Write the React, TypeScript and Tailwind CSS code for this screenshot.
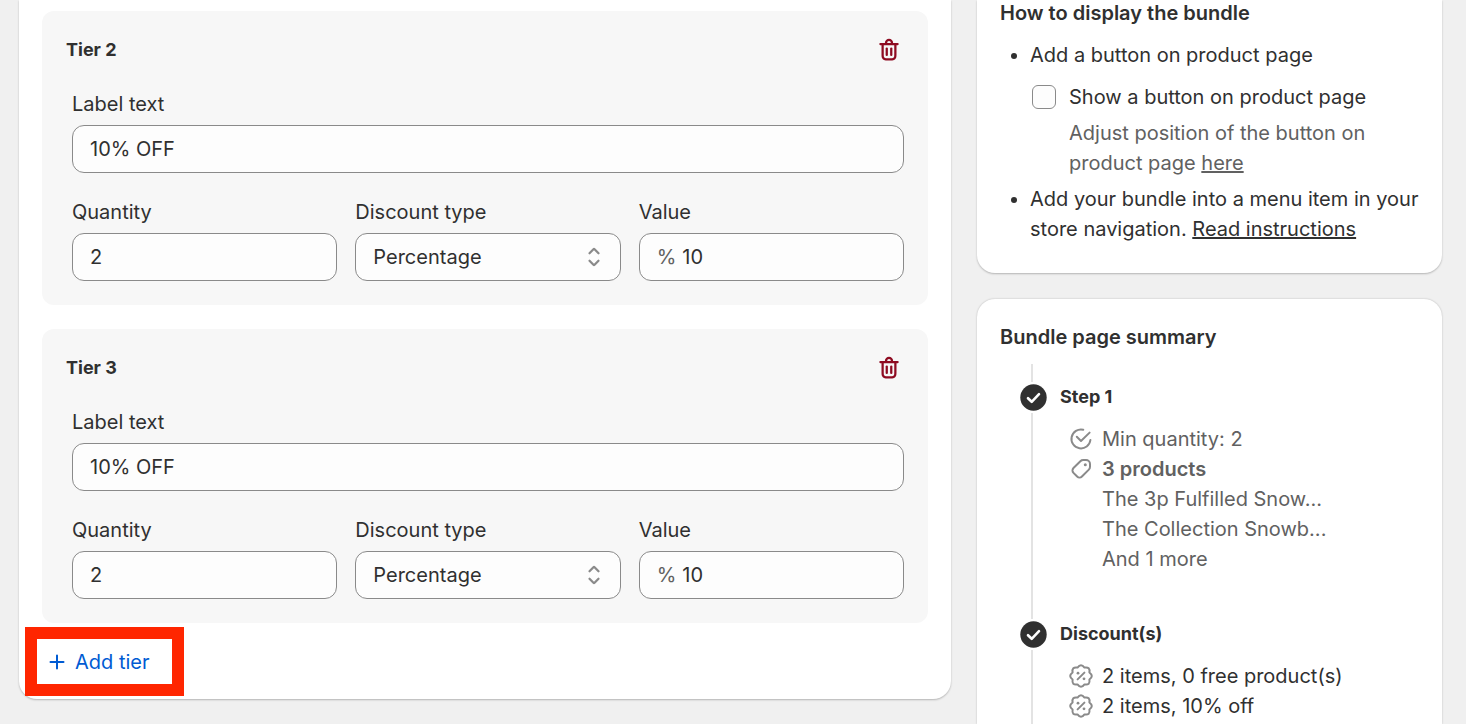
import React, { useId, useState } from "react";

interface Tier {
  id: number;
  label: string;
  quantity: string;
  discountType: string;
  value: string;
}

const initialTiers: Tier[] = [
  {
    id: 2,
    label: "10% OFF",
    quantity: "2",
    discountType: "Percentage",
    value: "10",
  },
  {
    id: 3,
    label: "10% OFF",
    quantity: "2",
    discountType: "Percentage",
    value: "10",
  },
];

const fieldClass =
  "w-full h-12 rounded-xl border border-[#8a8a8a] bg-[#fdfdfd] px-[17px] outline-none focus:border-[#303030]";

const DeleteIcon = () => (
  <svg viewBox="0 0 20 20" className="size-[30px] fill-current">
    <path d="M11.5 8.25a.75.75 0 0 1 .75.75v4.25a.75.75 0 0 1-1.5 0v-4.25a.75.75 0 0 1 .75-.75Z" />
    <path d="M9.25 9a.75.75 0 0 0-1.5 0v4.25a.75.75 0 0 0 1.5 0v-4.25Z" />
    <path
      fillRule="evenodd"
      d="M7.25 5.25a2.75 2.75 0 0 1 5.5 0h3a.75.75 0 0 1 0 1.5h-.75v5.45c0 1.68 0 2.52-.327 3.162a3 3 0 0 1-1.311 1.311c-.642.327-1.482.327-3.162.327h-.4c-1.68 0-2.52 0-3.162-.327a3 3 0 0 1-1.311-1.311c-.327-.642-.327-1.482-.327-3.162v-5.45h-.75a.75.75 0 0 1 0-1.5h3Zm1.5 0a1.25 1.25 0 1 1 2.5 0h-2.5Zm-2.25 1.5h7v5.45c0 .865-.001 1.423-.036 1.848-.033.408-.09.559-.128.633a1.5 1.5 0 0 1-.655.655c-.074.038-.225.095-.633.128-.425.035-.983.036-1.848.036h-.4c-.865 0-1.423-.001-1.848-.036-.408-.033-.559-.09-.633-.128a1.5 1.5 0 0 1-.656-.655c-.037-.074-.094-.225-.127-.633-.035-.425-.036-.983-.036-1.848v-5.45Z"
    />
  </svg>
);

const SelectIcon = () => (
  <svg
    viewBox="0 0 20 20"
    className="pointer-events-none absolute right-3 top-[9px] size-[30px] fill-[#8a8a8a]"
  >
    <path d="M10.884 4.323a1.25 1.25 0 0 0-1.768 0l-2.646 2.647a.75.75 0 0 0 1.06 1.06l2.47-2.47 2.47 2.47a.75.75 0 1 0 1.06-1.06l-2.646-2.647Z" />
    <path d="m13.53 13.03-2.646 2.647a1.25 1.25 0 0 1-1.768 0l-2.646-2.647a.75.75 0 0 1 1.06-1.06l2.47 2.47 2.47-2.47a.75.75 0 0 1 1.06 1.06Z" />
  </svg>
);

const PlusIcon = () => (
  <svg
    viewBox="0 0 16 16"
    className="size-4 fill-none stroke-current stroke-2"
    strokeLinecap="round"
  >
    <path d="M8 1.5v13M1.5 8h13" />
  </svg>
);

const CheckCircleIcon = () => (
  <svg
    viewBox="0 0 30 30"
    className="size-[30px] fill-none stroke-[#8a8a8a] stroke-2"
    strokeLinecap="round"
    strokeLinejoin="round"
  >
    <path d="M17.3 5.7A9.5 9.5 0 1 0 24.4 16" />
    <path d="M10.8 12.8 15 17l8.6-8.4" />
  </svg>
);

const TagIcon = () => (
  <svg
    viewBox="0 0 30 30"
    className="size-[30px] fill-none stroke-[#8a8a8a] stroke-2"
    strokeLinejoin="round"
  >
    <path d="M17.2 6h2.8A4 4 0 0 1 24 10v2.8a4 4 0 0 1-1.17 2.83l-6.9 6.9a3.4 3.4 0 0 1-4.8 0l-3.66-3.66a3.4 3.4 0 0 1 0-4.8l6.9-6.9A4 4 0 0 1 17.2 6Z" />
    <circle cx="19.3" cy="10.7" r="1.5" className="fill-[#8a8a8a] stroke-none" />
  </svg>
);

const DiscountIcon = () => (
  <svg
    viewBox="0 0 30 30"
    className="size-[30px] fill-none stroke-[#8a8a8a] stroke-2"
    strokeLinecap="round"
    strokeLinejoin="round"
  >
    <path d="M6.6 11.5Q5.6 5.6 11.5 6.6 15 1.8 18.5 6.6 24.4 5.6 23.4 11.5 28.2 15 23.4 18.5 24.4 24.4 18.5 23.4 15 28.2 11.5 23.4 5.600 24.4 6.6 18.5 1.8 15 6.6 11.5Z" />
    <path d="m11.6 18.4 6.8-6.8" />
    <circle cx="12" cy="12.2" r="1.4" className="fill-[#8a8a8a] stroke-none" />
    <circle cx="18" cy="17.8" r="1.4" className="fill-[#8a8a8a] stroke-none" />
  </svg>
);

const StepCheck = () => (
  <svg viewBox="0 0 27 27" className="my-0.5 size-[27px] shrink-0">
    <circle cx="13.5" cy="13.5" r="13.2" fill="#303030" />
    <path
      d="m8 14.2 3.7 3.6 7.3-7.6"
      fill="none"
      stroke="#fff"
      strokeWidth="2.6"
      strokeLinecap="round"
      strokeLinejoin="round"
    />
  </svg>
);

interface FieldProps {
  id: string;
  label: string;
  children: React.ReactNode;
}

const Field: React.FC<FieldProps> = ({ id, label, children }) => (
  <div className="flex min-w-0 flex-col gap-1.5">
    <label htmlFor={id}>{label}</label>
    {children}
  </div>
);

interface TierCardProps {
  tier: Tier;
  onChange: (tier: Tier) => void;
  onDelete: () => void;
}

const TierCard: React.FC<TierCardProps> = ({ tier, onChange, onDelete }) => {
  const id = useId();

  return (
    <section className="flex flex-col gap-6 rounded-xl bg-[#f7f7f7] p-6">
      <div className="flex items-center justify-between">
        <h3 className="text-lg leading-[30px] font-[650]">Tier {tier.id}</h3>
        <button
          type="button"
          aria-label={`Delete tier ${tier.id}`}
          onClick={onDelete}
          className="text-[#8e0b21]"
        >
          <DeleteIcon />
        </button>
      </div>

      <div className="ml-1.5 flex flex-col gap-6">
        <Field id={`${id}-label`} label="Label text">
          <input
            id={`${id}-label`}
            type="text"
            value={tier.label}
            onChange={(e) => onChange({ ...tier, label: e.target.value })}
            className={fieldClass}
          />
        </Field>

        <div className="grid grid-cols-3 gap-[18px]">
          <Field id={`${id}-quantity`} label="Quantity">
            <input
              id={`${id}-quantity`}
              type="text"
              inputMode="numeric"
              value={tier.quantity}
              onChange={(e) => onChange({ ...tier, quantity: e.target.value })}
              className={fieldClass}
            />
          </Field>

          <Field id={`${id}-type`} label="Discount type">
            <div className="relative">
              <select
                id={`${id}-type`}
                value={tier.discountType}
                onChange={(e) =>
                  onChange({ ...tier, discountType: e.target.value })
                }
                className={`${fieldClass} appearance-none`}
              >
                <option>Percentage</option>
                <option>Fixed amount</option>
              </select>
              <SelectIcon />
            </div>
          </Field>

          <Field id={`${id}-value`} label="Value">
            <div className={`${fieldClass} flex items-center gap-1.5`}>
              <span className="text-[#616161]">%</span>
              <input
                id={`${id}-value`}
                type="text"
                inputMode="numeric"
                value={tier.value}
                onChange={(e) => onChange({ ...tier, value: e.target.value })}
                className="w-full min-w-0 bg-transparent outline-none"
              />
            </div>
          </Field>
        </div>
      </div>
    </section>
  );
};

interface SummaryStepProps {
  title: string;
  className?: string;
  children: React.ReactNode;
}

const SummaryStep: React.FC<SummaryStepProps> = ({
  title,
  className = "",
  children,
}) => (
  <li className="group flex gap-3 last:flex-1">
    <div className="flex w-7 flex-col">
      <StepCheck />
      <span className="ml-[11px] w-0.5 flex-1 bg-[#e3e3e3]" />
    </div>
    <div className="min-w-0 pb-[45px] group-last:pb-0">
      <h3 className="mb-3 text-lg leading-[30px] font-[650]">{title}</h3>
      <ul className={`ml-1.5 ${className}`}>{children}</ul>
    </div>
  </li>
);

interface SummaryLineProps {
  icon?: React.ReactNode;
  children: React.ReactNode;
}

const SummaryLine: React.FC<SummaryLineProps> = ({ icon, children }) => (
  <li className="flex gap-1.5">
    <span className="size-[30px] shrink-0">{icon}</span>
    <span className="truncate">{children}</span>
  </li>
);

const App = () => {
  const [tiers, setTiers] = useState<Tier[]>(initialTiers);
  const [showButton, setShowButton] = useState(false);

  const updateTier = (tier: Tier) => {
    setTiers(tiers.map((item) => (item.id === tier.id ? tier : item)));
  };

  const addTier = () => {
    const lastId = tiers.length > 0 ? tiers[tiers.length - 1].id : 1;

    setTiers([...tiers, { ...initialTiers[0], id: lastId + 1 }]);
  };

  return (
    <div className="grid min-h-screen grid-cols-[minmax(0,1fr)_465px] gap-[26px] bg-[#f0f0f0] pr-6 pl-[19px] font-['Inter',sans-serif] text-[20px] leading-[30px] font-normal text-[#303030]">
      <main className="self-start rounded-b-[18px] bg-white px-[23px] pt-[11px] pb-[3px] shadow-[0_1px_2px_rgba(0,0,0,0.25)]">
        <div className="flex flex-col gap-6">
          {tiers.map((tier) => (
            <TierCard
              key={tier.id}
              tier={tier}
              onChange={updateTier}
              onDelete={() =>
                setTiers(tiers.filter((item) => item.id !== tier.id))
              }
            />
          ))}
        </div>

        <div className="mt-1 -ml-[17px] flex w-fit border-[12px] border-[#ff2600]">
          <button
            type="button"
            onClick={addTier}
            className="flex h-[45px] items-center gap-2.5 pr-[22px] pl-3 text-[#005bd3]"
          >
            <PlusIcon />
            Add tier
          </button>
        </div>
      </main>

      <aside className="flex min-w-0 flex-col gap-[26px]">
        <section className="rounded-b-[18px] bg-white px-[23px] pb-[29px] shadow-[0_1px_2px_rgba(0,0,0,0.25)]">
          <h2 className="leading-[26px] font-semibold">
            How to display the bundle
          </h2>

          <ul className="mt-3.5 flex list-disc flex-col gap-1.5 pl-[30px]">
            <li>
              Add a button on product page
              <div className="mt-3 flex items-start gap-[13px] pl-0.5">
                <input
                  id="show-button"
                  type="checkbox"
                  checked={showButton}
                  onChange={(e) => setShowButton(e.target.checked)}
                  className="mt-[3px] size-6 shrink-0 appearance-none rounded-md border border-[#8a8a8a] bg-[#fdfdfd] checked:bg-[#303030]"
                />
                <div className="flex flex-col gap-1.5">
                  <label htmlFor="show-button">
                    Show a button on product page
                  </label>
                  <p className="text-[#616161]">
                    Adjust position of the button on product page{" "}
                    <a href="#position" className="underline">
                      here
                    </a>
                  </p>
                </div>
              </div>
            </li>
            <li>
              Add your bundle into a menu item in your store navigation.{" "}
              <a href="#instructions" className="underline">
                Read instructions
              </a>
            </li>
          </ul>
        </section>

        <section className="flex flex-1 flex-col rounded-t-[18px] bg-white px-[23px] pt-[23px] shadow-[0_0_2px_rgba(0,0,0,0.25)]">
          <h2 className="font-semibold">Bundle page summary</h2>

          <div className="mt-3 ml-5 flex flex-1 flex-col">
            <div className="ml-[11px] h-[18px] w-0.5 bg-[#e3e3e3]" />
            <ol className="flex flex-1 flex-col">
              <SummaryStep title="Step 1" className="text-[#616161]">
                <SummaryLine icon={<CheckCircleIcon />}>
                  Min quantity: 2
                </SummaryLine>
                <SummaryLine icon={<TagIcon />}>
                  <strong className="font-semibold">3 products</strong>
                </SummaryLine>
                <SummaryLine>The 3p Fulfilled Snow...</SummaryLine>
                <SummaryLine>The Collection Snowb...</SummaryLine>
                <SummaryLine>And 1 more</SummaryLine>
              </SummaryStep>
              <SummaryStep title="Discount(s)">
                <SummaryLine icon={<DiscountIcon />}>
                  2 items, 0 free product(s)
                </SummaryLine>
                <SummaryLine icon={<DiscountIcon />}>
                  2 items, 10% off
                </SummaryLine>
              </SummaryStep>
            </ol>
          </div>
        </section>
      </aside>
    </div>
  );
};

export default App;
